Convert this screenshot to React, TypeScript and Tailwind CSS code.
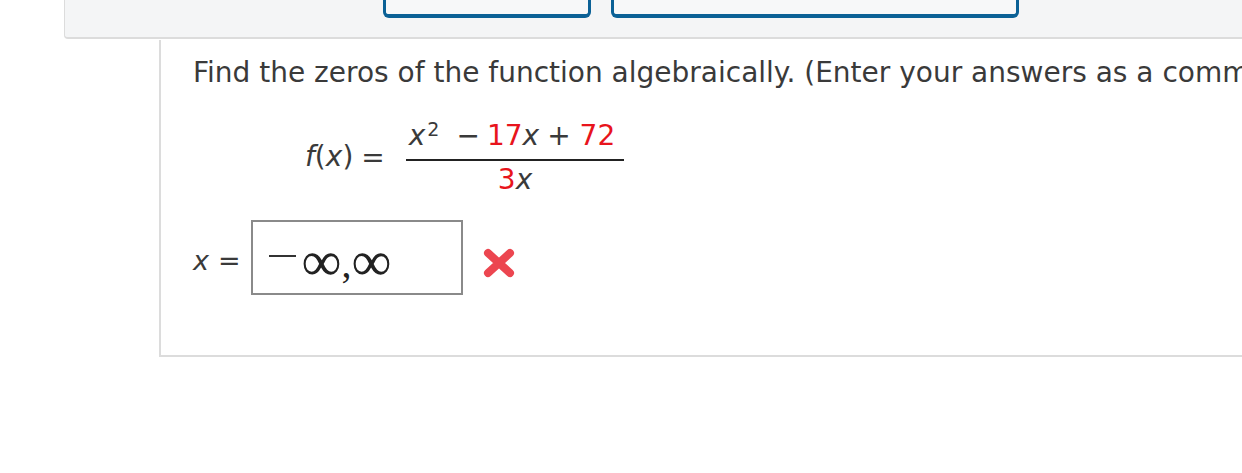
import React from "react";

export default function App() {
  return (
    <div className="w-[1242px] h-[473px] bg-white overflow-hidden relative font-['DejaVu_Sans',Verdana,sans-serif]">
      {/* top panel */}
      <div className="ml-[64px] h-[39px] bg-[#f4f5f6] border-l border-b-2 border-[#dcdcdc] rounded-bl-[4px] flex items-start pl-[318px] gap-[20px]">
        <div className="w-[208px] h-[18px] border-x-[3px] border-b-[4px] border-[#0b6196] rounded-b-[6px] bg-[#f7f8f9]" />
        <div className="w-[408px] h-[18px] border-x-[3px] border-b-[4px] border-[#0b6196] rounded-b-[6px] bg-[#f7f8f9]" />
      </div>
      {/* content panel */}
      <div className="ml-[159px] mt-[1px] h-[317px] border-l-2 border-b-2 border-[#dcdcdc] pl-[32px] pt-[16px] text-[#3a3a3a]">
        <div className="text-[28px] leading-[34px] whitespace-nowrap">
          Find the zeros of the function algebraically. (Enter your answers as a comma-separated list.)
        </div>
        {/* formula */}
        <div className="flex items-center mt-[30px] ml-[112px] text-[28px]">
          <div className="leading-[32px] whitespace-nowrap relative top-[-1px]">
            <span className="italic">f</span>(<span className="italic">x</span>)
          </div>
          <span className="ml-[8px] mr-[21px] leading-[32px]">=</span>
          <div className="flex flex-col items-center">
            <div className="pl-[3px] pr-[9px] whitespace-nowrap leading-[32px]">
              <span className="italic">x</span>
              <sup className="text-[19px] ml-[2px]">2</sup>
              <span className="ml-[17px] mr-[7px]">−</span>
              <span className="text-[#e8141c]">17</span>
              <span className="italic">x</span>
              <span className="ml-[8px] mr-[9px]">+</span>
              <span className="text-[#e8141c]">72</span>
            </div>
            <div className="w-full h-[2px] bg-[#222] mt-[7px]" />
            <div className="leading-[32px] mt-[3px]">
              <span className="text-[#e8141c]">3</span>
              <span className="italic">x</span>
            </div>
          </div>
        </div>
        {/* answer row */}
        <div className="flex items-center mt-[24px]">
          <span className="italic text-[27px] leading-[32px] relative top-[3px]">x</span>
          <span className="text-[27px] leading-[32px] ml-[9px] relative top-[3px]">=</span>
          <div className="ml-[10px] w-[212px] h-[75px] border-2 border-[#8a8a8a] flex items-center pl-[16px] text-[#222] font-['Liberation_Serif','Times_New_Roman',serif]">
            <div className="flex items-center relative top-[3px]">
              <span className="w-[27px] h-[2px] bg-[#333] relative top-[-5px] mr-[6px]" />
              <span className="text-[56px] leading-[40px]">∞</span>
              <span className="text-[40px] leading-[40px] relative top-[3px]">,</span>
              <span className="text-[56px] leading-[40px]">∞</span>
            </div>
          </div>
          <svg width="36" height="34" viewBox="0 0 36 34" className="ml-[18px] relative top-[5px]">
            <path d="M7 7 L29 27 M29 7 L7 27" stroke="#ec4650" strokeWidth="8" strokeLinecap="round" />
          </svg>
        </div>
      </div>
    </div>
  );
}
